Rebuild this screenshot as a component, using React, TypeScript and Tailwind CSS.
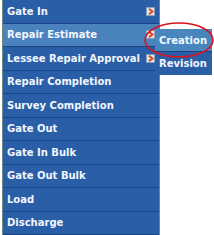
import React from 'react';

const items: { label: string; arrow?: boolean; active?: boolean }[] = [
  { label: 'Gate In', arrow: true },
  { label: 'Repair Estimate', arrow: true, active: true },
  { label: 'Lessee Repair Approval', arrow: true },
  { label: 'Repair Completion' },
  { label: 'Survey Completion' },
  { label: 'Gate Out' },
  { label: 'Gate In Bulk' },
  { label: 'Gate Out Bulk' },
  { label: 'Load' },
  { label: 'Discharge' },
];

function Arrow() {
  return (
    <svg width="9" height="9" viewBox="0 0 9 9" className="shrink-0">
      <rect x="0.5" y="0.5" width="8" height="8" fill="#dfe6ee" stroke="#8aa0b8" />
      <path d="M3 1.8 L6.4 4.5 L3 7.2" fill="none" stroke="#e0471c" strokeWidth="2" />
    </svg>
  );
}

export default function App() {
  return (
    <div
      className="relative h-[235px] w-[214px] overflow-hidden bg-white"
      style={{ fontFamily: '"DejaVu Sans", Verdana, sans-serif' }}
    >
      <div className="ml-[2px] flex w-[158px] flex-col border-x border-[#6d8a7c] bg-[#2a5ea6]">
        {items.map((it) => (
          <div
            key={it.label}
            className={`flex h-[23.5px] items-center justify-between border-b border-[#1b4384] pl-[4px] pr-[4px] text-[10px] font-bold text-[#f2f6ff] ${
              it.active ? 'bg-[#4a82bd]' : ''
            }`}
          >
            <span className="whitespace-nowrap">{it.label}</span>
            {it.arrow && <Arrow />}
          </div>
        ))}
      </div>

      <div className="absolute left-[155px] top-[29px] flex w-[57px] flex-col bg-[#2a5ea6] text-[10px] font-bold text-[#f2f6ff]">
        <div className="flex h-[23px] items-center border-b border-[#1b4384] bg-[#4a86be] pl-[4px]">Creation</div>
        <div className="flex h-[23px] items-center pl-[4px]">Revision</div>
      </div>

      <svg className="pointer-events-none absolute left-[143px] top-[21px]" width="71" height="38" viewBox="0 0 71 38">
        <ellipse cx="36" cy="19" rx="34" ry="17" fill="none" stroke="#d8141c" strokeWidth="1.6" />
      </svg>
    </div>
  );
}
